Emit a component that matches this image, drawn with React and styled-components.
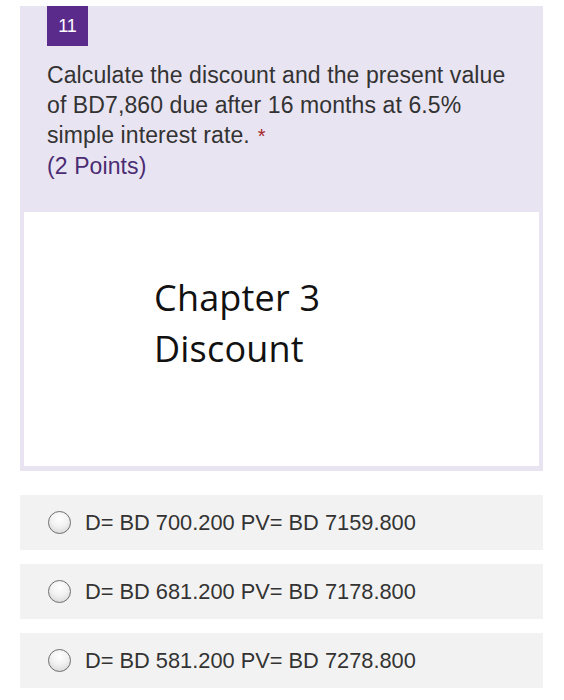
import React from "react";
import styled, { createGlobalStyle } from "styled-components";

const Global = createGlobalStyle`
  html, body { margin: 0; padding: 0; background: #ffffff; }
  body { font-family: "Liberation Sans", Arial, sans-serif; }
`;

const Page = styled.div`
  width: 564px;
  padding: 6px 21px 0 20px;
  box-sizing: border-box;
  display: flex;
  flex-direction: column;
`;

const QuestionCard = styled.section`
  background: #e9e4f2;
  display: flex;
  flex-direction: column;
  padding: 0 4px 5px 4px;
`;

const Header = styled.div`
  display: flex;
  flex-direction: column;
  padding: 0 12px 31px 23px;
`;

const Badge = styled.div`
  width: 41px;
  height: 40px;
  background: #5b2b8c;
  color: #ffffff;
  font-size: 18px;
  display: flex;
  align-items: center;
  justify-content: center;
  margin-bottom: 14px;
`;

const Title = styled.div`
  font-size: 23px;
  line-height: 30px;
  letter-spacing: 0.1px;
  color: #333333;
`;

const Required = styled.span`
  color: #a4262c;
  margin-left: 8px;
  font-size: 20px;
`;

const Points = styled.div`
  font-size: 23px;
  line-height: 30px;
  letter-spacing: 0.1px;
  color: #4a2c72;
`;

const ImageBox = styled.div`
  background: #ffffff;
  height: 254px;
  display: flex;
  flex-direction: column;
  justify-content: center;
  padding: 0 0 32px 130px;
  box-sizing: border-box;
`;

const SlideLine = styled.div`
  font-family: "Open Sans", "Noto Sans", sans-serif;
  font-size: 36px;
  line-height: 51px;
  color: #111111;
  letter-spacing: 0.2px;
`;

const Options = styled.div`
  display: flex;
  flex-direction: column;
  gap: 14px;
  margin-top: 24px;
`;

const Option = styled.label`
  height: 55px;
  background: #f2f2f2;
  display: flex;
  align-items: center;
  padding-left: 28px;
  gap: 14px;
`;

const Radio = styled.span`
  width: 23px;
  height: 23px;
  border-radius: 50%;
  border: 1px solid #6e6e6e;
  background: radial-gradient(circle at 50% 30%, #ffffff 0%, #f2f2f2 45%, #d0d0d0 100%);
  box-sizing: border-box;
  flex: none;
`;

const OptionText = styled.span`
  font-size: 21.8px;
  color: #333333;
`;

const answers = [
  "D= BD 700.200 PV= BD 7159.800",
  "D= BD 681.200 PV= BD 7178.800",
  "D= BD 581.200 PV= BD 7278.800",
];

export default function App() {
  return (
    <>
      <Global />
      <Page>
        <QuestionCard>
          <Header>
            <Badge>11</Badge>
            <Title>
              Calculate the discount and the present value of BD7,860 due after 16 months at 6.5% simple interest rate.
              <Required>*</Required>
            </Title>
            <Points>(2 Points)</Points>
          </Header>
          <ImageBox>
            <SlideLine>Chapter 3</SlideLine>
            <SlideLine>Discount</SlideLine>
          </ImageBox>
        </QuestionCard>
        <Options>
          {answers.map((a) => (
            <Option key={a}>
              <Radio />
              <OptionText>{a}</OptionText>
            </Option>
          ))}
        </Options>
      </Page>
    </>
  );
}
